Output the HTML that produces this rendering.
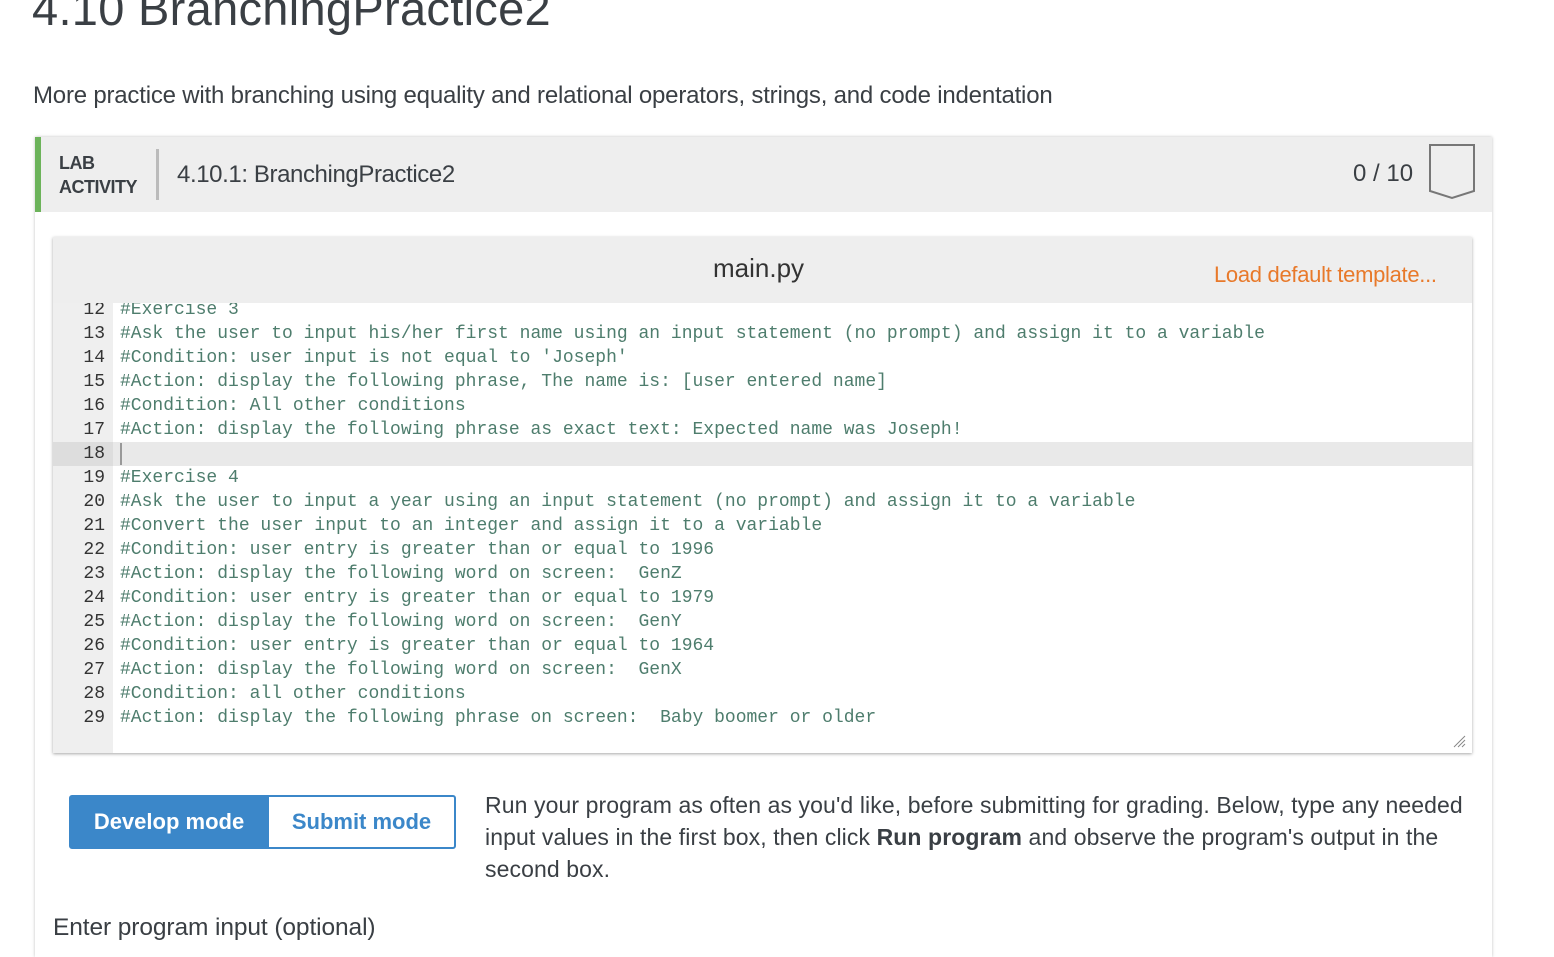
<!DOCTYPE html>
<html><head><meta charset="utf-8"><style>
*{margin:0;padding:0;box-sizing:border-box}
body{width:1554px;height:944px;overflow:hidden;background:#fff;font-family:"Liberation Sans",sans-serif;color:#34393e;position:relative}
.abs{position:absolute;white-space:nowrap}
h1{position:absolute;left:32px;top:-19px;font-size:47px;font-weight:normal;color:#3a3f44;letter-spacing:0.3px}
.sub{left:33px;top:82px;font-size:24px;letter-spacing:-0.2px;color:#3a3f44}
.card{position:absolute;left:35px;top:137px;width:1457px;height:820px;background:#fff;box-shadow:0 0 3px rgba(0,0,0,.25)}
.chead{position:absolute;left:0;top:0;width:1457px;height:75px;background:#eee;border-left:6px solid #6cb35a}
.lab{left:18px;top:14px;font-size:18px;font-weight:bold;line-height:24px;color:#3a3f44;letter-spacing:-0.5px}
.vsep{position:absolute;left:115px;top:12px;width:3px;height:51px;background:#bbb}
.ctitle{left:136px;top:24px;font-size:24px;letter-spacing:-0.4px;color:#3a3f44}
.score{left:1312px;top:23px;font-size:24px;color:#3a3f44}
.ed{position:absolute;left:18px;top:100px;width:1419px;height:516px;box-shadow:0 1px 3px rgba(0,0,0,.35);background:#fff;overflow:hidden}
.edh{position:absolute;left:0;top:0;width:100%;height:66px;background:#eee}
.fn{left:660px;top:16px;font-size:26px;color:#333}
.ld{left:1161px;top:25px;font-size:22px;letter-spacing:-0.3px;color:#e8792a}
.code{position:absolute;left:0;top:66px;width:100%;height:450px;overflow:hidden}
.gut{position:absolute;left:0;top:0;width:60px;height:100%;background:#efefef}
.ln{position:absolute;left:0;width:100%;height:24px;font-family:"Liberation Mono",monospace;font-size:18px;line-height:24px;white-space:pre}
.ln .n{display:inline-block;width:52px;text-align:right;color:#333}
.ln .t{position:absolute;left:67px;color:#4e7d6d}
.cur{background:#e9e9e9}
.btn{position:absolute;top:658px;height:54px;border:2px solid #3b87c9;font-weight:bold;font-size:22px;line-height:50px;text-align:center}
.desc{left:450px;top:652px;font-size:23px;line-height:32px;letter-spacing:0.1px;color:#3a3f44}
.inp{left:18px;top:777px;font-size:24.5px;letter-spacing:-0.1px;color:#3a3f44}
</style></head><body>
<h1>4.10 BranchingPractice2</h1>
<div class="abs sub">More practice with branching using equality and relational operators, strings, and code indentation</div>
<div class="card">
 <div class="chead">
  <div class="abs lab">LAB<br>ACTIVITY</div>
  <div class="vsep"></div>
  <div class="abs ctitle">4.10.1: BranchingPractice2</div>
  <div class="abs score">0 / 10</div>
  <svg style="position:absolute;left:1387px;top:6px" width="50" height="58"><path d="M2 2H46V48L24 55L2 48Z" fill="none" stroke="#777" stroke-width="2"/></svg>
 </div>
 <div class="ed">
  <div class="edh"><div class="abs fn">main.py</div><div class="abs ld">Load default template...</div></div>
  <div class="code">
   <div class="gut"></div>
   <div class="ln" style="top:-5px"><span class="n">12</span><span class="t">#Exercise 3</span></div>
   <div class="ln" style="top:19px"><span class="n">13</span><span class="t">#Ask the user to input his/her first name using an input statement (no prompt) and assign it to a variable</span></div>
   <div class="ln" style="top:43px"><span class="n">14</span><span class="t">#Condition: user input is not equal to 'Joseph'</span></div>
   <div class="ln" style="top:67px"><span class="n">15</span><span class="t">#Action: display the following phrase, The name is: [user entered name]</span></div>
   <div class="ln" style="top:91px"><span class="n">16</span><span class="t">#Condition: All other conditions</span></div>
   <div class="ln" style="top:115px"><span class="n">17</span><span class="t">#Action: display the following phrase as exact text: Expected name was Joseph!</span></div>
   <div class="ln cur" style="top:139px"><span class="n" style="background:#ddd;width:60px;padding-right:8px">18</span><span class="t" style="border-left:2px solid #999;height:22px;top:1px"></span></div>
   <div class="ln" style="top:163px"><span class="n">19</span><span class="t">#Exercise 4</span></div>
   <div class="ln" style="top:187px"><span class="n">20</span><span class="t">#Ask the user to input a year using an input statement (no prompt) and assign it to a variable</span></div>
   <div class="ln" style="top:211px"><span class="n">21</span><span class="t">#Convert the user input to an integer and assign it to a variable</span></div>
   <div class="ln" style="top:235px"><span class="n">22</span><span class="t">#Condition: user entry is greater than or equal to 1996</span></div>
   <div class="ln" style="top:259px"><span class="n">23</span><span class="t">#Action: display the following word on screen:  GenZ</span></div>
   <div class="ln" style="top:283px"><span class="n">24</span><span class="t">#Condition: user entry is greater than or equal to 1979</span></div>
   <div class="ln" style="top:307px"><span class="n">25</span><span class="t">#Action: display the following word on screen:  GenY</span></div>
   <div class="ln" style="top:331px"><span class="n">26</span><span class="t">#Condition: user entry is greater than or equal to 1964</span></div>
   <div class="ln" style="top:355px"><span class="n">27</span><span class="t">#Action: display the following word on screen:  GenX</span></div>
   <div class="ln" style="top:379px"><span class="n">28</span><span class="t">#Condition: all other conditions</span></div>
   <div class="ln" style="top:403px"><span class="n">29</span><span class="t">#Action: display the following phrase on screen:  Baby boomer or older</span></div>
   <svg style="position:absolute;left:1398px;top:430px" width="16" height="16"><path d="M3 14L14 3M7 14L14 7M11 14L14 11" stroke="#888" stroke-width="1"/></svg>
  </div>
 </div>
 <div class="btn" style="left:34px;width:200px;background:#3b87c9;color:#fff;border-radius:3px 0 0 3px">Develop mode</div>
 <div class="btn" style="left:232px;width:189px;background:#fff;color:#3b87c9;border-radius:0 3px 3px 0">Submit mode</div>
 <div class="abs desc">Run your program as often as you'd like, before submitting for grading. Below, type any needed<br>input values in the first box, then click <b>Run program</b> and observe the program's output in the<br>second box.</div>
 <div class="abs inp">Enter program input (optional)</div>
</div>
</body></html>
